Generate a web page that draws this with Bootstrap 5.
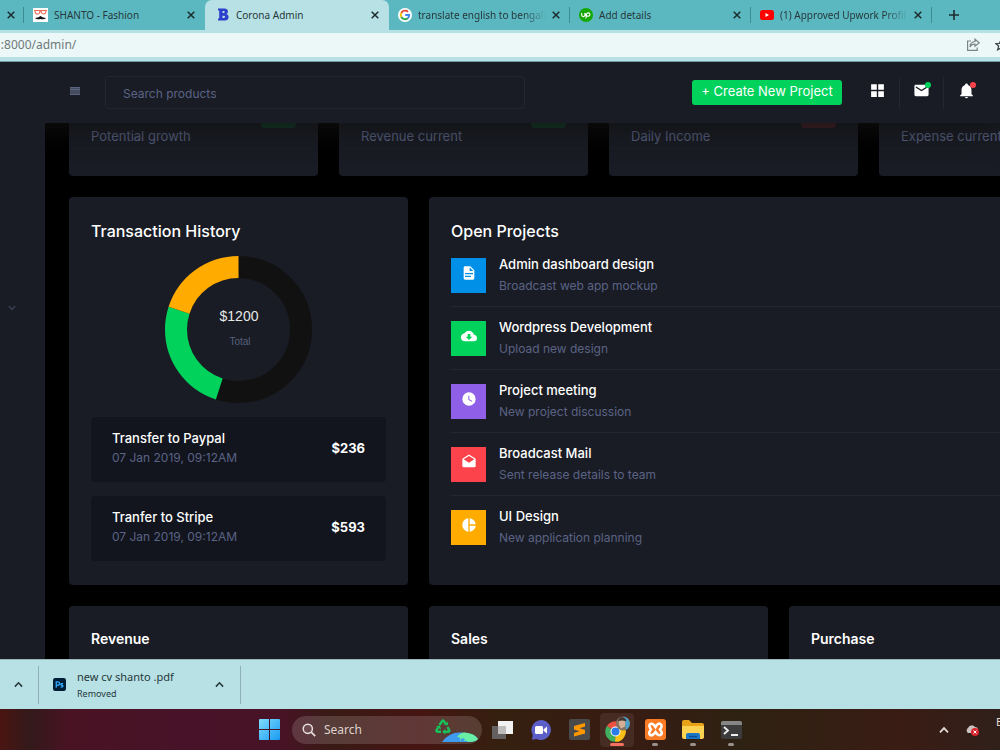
<!DOCTYPE html>
<html lang="en">
<head>
<meta charset="utf-8">
<meta name="viewport" content="width=device-width, initial-scale=1">
<title>Corona Admin</title>
<link href="https://cdn.jsdelivr.net/npm/bootstrap@5.3.0/dist/css/bootstrap.min.css" rel="stylesheet">
<style>
:root{--panel:#191c24;--muted:#5b6385;--teal:#5bb8c1;--aqua:#b7e1e4;--line:#242731}
body{font-family:Inter,"Liberation Sans",sans-serif;font-size:13px;line-height:20px;background:#000;color:#fff}
button{font:inherit}
svg{display:block;flex:none}
.chrome-ui{font-family:"Noto Sans","Open Sans",sans-serif;color:#26383b}
.icon-btn{border:0;background:none;padding:0;color:inherit}
/* browser tabs */
.tab-strip{height:30px;background:var(--teal);font-size:10px}
.tab-item{width:181px;height:30px;padding:0 10px 1px 9px;gap:6px;flex:none;position:relative}
.tab-item a{color:inherit;text-decoration:none;white-space:nowrap;overflow:hidden}
.tab-item.first-tab{width:24px;padding:0 9px 0 0}
.tab-item.split::after{content:"";position:absolute;right:0;top:7px;height:16px;width:1px;background:#3f8b93}
.tab-item.current{width:184px;padding-left:12px;background:var(--aqua);border-radius:7px 7px 0 0}
.fade-end{-webkit-mask-image:linear-gradient(90deg,#000 82%,transparent)}
.address-row{height:32px;background:var(--aqua);padding:3px 0 4px;border-bottom:1px solid #6f9d9f}
.address-field{background:#ecf8f8}
.address-field input{border:0;background:none;color:#71797a;font-size:12px;margin-left:-6px;padding:0;outline:0}
.star-btn{width:5px;margin-left:14px}
/* dashboard */
.top-bar{height:61px;background:var(--panel);padding:0 26px 0 70px;box-shadow:0 4px 30px #111;position:relative;z-index:2}
.menu-btn{padding-bottom:4px;margin-right:25px}
.search-field{max-width:420px;height:33px;background:var(--panel);border:1px solid #242731;border-radius:4px;color:#fff;font-size:12px;padding:1px 17px 0}
.search-field::placeholder{color:var(--muted);opacity:1}
.btn-create{background:#00d25b;color:#fff;font-size:13px;line-height:20px;padding:1px 0 4px;width:150px;border-radius:3px;border:0;white-space:nowrap}
.btn-create:hover{background:#00b84f;color:#fff}
.bar-icons{margin-left:14px;margin-right:-14px}
.bar-icons>*{width:44px;height:31px;border-right:1px solid var(--line);padding-bottom:4px}
.bar-icons>*:last-child{border:0}
.dot{position:absolute;top:0;right:-1px;width:6px;height:6px;border-radius:50%}
.shell{width:calc(100vw + 152px)}
.side-bar{width:45px;background:var(--panel);flex:none;position:relative;z-index:3}
.content-area{padding:0 24px}
.content-area>.row{--bs-gutter-x:21px;margin-bottom:21px}
.panel{background:var(--panel);border-radius:4px;padding:22px 22px 24px;height:100%}
.panel.stat{border-radius:0 0 4px 4px;padding:0 22px;height:53px}
.stat-mark{width:35px;height:5px;border-radius:0 0 4px 4px}
.sub{color:var(--muted);font-size:12px}
.panel h2{font-size:16px;line-height:24px;font-weight:500;margin:0}
.panel.brief h2{font-size:14px;line-height:22px;font-weight:600}
h3{font-size:13px;line-height:21px;font-weight:500;margin:0}
.panel.stat .sub{padding-top:3px;font-size:13px}
.donut{margin:13px auto 14px}
.tx{background:#12151e;border-radius:4px;padding:11px 21px 14px;margin-bottom:14px}
.tx:last-child{margin:0}
.tx h3{line-height:20px}
.projects{padding-top:1px}
.project{height:63px;border-bottom:1px solid var(--line);gap:13px}
.project:last-child{border-color:transparent}
.project .sub{line-height:21px}
.tile{width:35px;height:35px;padding-bottom:4px;flex:none}
/* bottom bars */
.downloads{height:50px;background:var(--aqua);font-size:11px;border-top:1px solid #97b9bc;line-height:17px}
.downloads .rule{width:1px;height:38px;background:#8fb1b4}
.file-name{width:138px;margin-left:11px}
.file-state{font-size:9px}
.taskbar{height:41px;background:linear-gradient(90deg,#4a1512 0,#33191a 3%,#4a1324 7%,#481328 18%,#481326 28%,#391a15 33%,#461513 42%,#35200f 50%,#381b13 62%,#2e2213 74%,#3a1c14 90%,#30201a);color:#e4dcd8}
.task-side{flex:1 1 0;min-width:0}
.task-search{width:190px;height:28px;border-radius:14px;background:#ffffff26;padding-left:10px;overflow:hidden;flex:none}
.task-search input{border:0;background:none;outline:0;color:#e4dcd8;font-size:12px;width:105px;padding:0 0 0 8px}
.task-search input::placeholder{color:#ddd2ce;opacity:1}
.app{width:38px;height:40px;position:relative}
.app::after{content:"";position:absolute;bottom:4px;left:50%;margin-left:-3px;width:6px;height:3px;border-radius:2px;background:transparent}
.app.open::after{background:#9b918c}
.app.active::after{background:#f4705f;width:14px;margin-left:-7px}
.app.active::before{content:"";position:absolute;inset:3px 2px;background:#ffffff12;border-radius:4px}
.lang{width:4px;font-size:11px;height:31px;line-height:16px}
</style>
</head>
<body class="vh-100 d-flex flex-column overflow-hidden">
<svg width="0" height="0" class="position-absolute" aria-hidden="true">
  <symbol id="x" viewBox="0 0 8 8"><path d="M.7.7l6.6 6.6M7.3.7L.7 7.3" stroke="#1c2b2e" stroke-width="1.5"/></symbol>
  <symbol id="up" viewBox="0 0 8 6"><path d="M.8 4.9L4 1.5l3.2 3.4" fill="none" stroke="currentColor" stroke-width="1.4"/></symbol>
</svg>

<nav class="tab-strip chrome-ui d-flex align-items-center flex-shrink-0 overflow-hidden" aria-label="Browser tabs">
  <div class="tab-item first-tab split d-flex align-items-center justify-content-end"><button class="icon-btn" aria-label="Close tab"><svg width="8" height="8"><use href="#x"/></svg></button></div>
  <div class="tab-item d-flex align-items-center">
    <svg width="15" height="14" viewBox="0 0 15 14"><path fill="#fff" d="M0 0h15v14H0z"/><path d="M1 2.500h13M2 2.500q0 4 3 3.500Q7 5.500 7 2.500M8 2.500q0 3 2.500 3.500Q13 6 13 2.500" fill="none" stroke="#ee6c55" stroke-width="1.100"/><path d="M2 10q3 0 5.500-2Q10 10 13 10q-1.500 2-5.500 1Q3.500 12 2 10z" fill="#111"/></svg>
    <a href="#" class="flex-fill">SHANTO - Fashion</a>
    <button class="icon-btn" aria-label="Close tab"><svg width="8" height="8"><use href="#x"/></svg></button>
  </div>
  <div class="tab-item current d-flex align-items-center">
    <svg width="13" height="13" viewBox="0 0 13 13"><path fill="#2b3fcb" fill-rule="evenodd" d="M1 .5h6.500c4 0 4.500 4.500 1.800 5.500 3.500 1.200 3 6.500-1.500 6.500H1v-2h1.200v-8H1zM5.500 3v2h1.300C8 5 8 3 6.800 3zM5.500 7.800V10H7c1.500 0 1.500-2.200 0-2.200z"/></svg>
    <a href="#" class="flex-fill">Corona Admin</a>
    <button class="icon-btn" aria-label="Close tab"><svg width="8" height="8"><use href="#x"/></svg></button>
  </div>
  <div class="tab-item split d-flex align-items-center">
    <svg width="14" height="14" viewBox="0 0 14 14"><circle cx="7" cy="7" r="7" fill="#fff"/><g fill="none" stroke-width="1.900"><path d="M10 3.800A4.200 4.200 0 0 0 3.300 5" stroke="#ea4335"/><path d="M3.300 5a4.200 4.200 0 0 0 0 4" stroke="#fbbc05"/><path d="M3.300 9a4.200 4.200 0 0 0 6.500 1.200" stroke="#34a853"/><path d="M9.800 10.200A4.200 4.200 0 0 0 11.200 7H7.200" stroke="#4285f4"/></g></svg>
    <a href="#" class="flex-fill fade-end">translate english to bengali</a>
    <button class="icon-btn" aria-label="Close tab"><svg width="8" height="8"><use href="#x"/></svg></button>
  </div>
  <div class="tab-item split d-flex align-items-center">
    <svg width="14" height="14" viewBox="0 0 14 14"><circle cx="7" cy="7" r="7" fill="#14a800"/><path d="M2.700 5v2a1.600 1.600 0 0 0 3.200 0V5C6.500 7 7.500 8.300 9.200 8.300a1.700 1.700 0 1 0-1.700-1.700L6.800 10.500" fill="none" stroke="#fff" stroke-width="1.100"/></svg>
    <a href="#" class="flex-fill">Add details</a>
    <button class="icon-btn" aria-label="Close tab"><svg width="8" height="8"><use href="#x"/></svg></button>
  </div>
  <div class="tab-item split d-flex align-items-center">
    <svg width="14" height="10" viewBox="0 0 14 10"><rect width="14" height="10" rx="2.500" fill="#f00"/><path d="M5.500 3v4L9 5z" fill="#fff"/></svg>
    <a href="#" class="flex-fill fade-end">(1) Approved Upwork Profil</a>
    <button class="icon-btn" aria-label="Close tab"><svg width="8" height="8"><use href="#x"/></svg></button>
  </div>
  <button class="icon-btn ms-3" aria-label="New tab"><svg width="12" height="12" viewBox="0 0 12 12"><path d="M6 1v10M1 6h10" stroke="#1c2b2e" stroke-width="1.600"/></svg></button>
</nav>

<div class="address-row chrome-ui flex-shrink-0">
  <div class="address-field h-100 d-flex align-items-center overflow-hidden">
    <input class="flex-fill" type="text" aria-label="Address" value="1:8000/admin/">
    <button class="icon-btn" aria-label="Share"><svg width="15" height="14" viewBox="0 0 15 14" fill="none" stroke="#7b8384" stroke-width="1.200"><path d="M5 3H1.600v9.400h9.600V9.500M9 1.200l4.200 3.600L9 8.300V6.200C6.800 6.200 5 7 3.900 9c.2-3 2-5.200 5.100-5.500z"/></svg></button>
    <button class="icon-btn star-btn" aria-label="Bookmark"><svg width="12" height="12" viewBox="0 0 12 12"><path d="M6 .8l1.500 3.500 3.800.3-2.900 2.500.9 3.700L6 8.900l-3.300 1.900.9-3.700L.7 4.600l3.800-.3z" fill="none" stroke="#40484a" stroke-width="1.300"/></svg></button>
  </div>
</div>

<main class="flex-fill overflow-hidden d-flex flex-column" style="min-height:0">
  <header class="top-bar d-flex align-items-center flex-shrink-0">
    <button class="icon-btn menu-btn" aria-label="Toggle menu"><svg width="10" height="8" viewBox="0 0 10 8"><path d="M0 .8h10M0 2.900h10M0 5h10M0 7.100h10" stroke="#747c9c" stroke-width="1.200"/></svg></button>
    <input class="search-field form-control" type="search" placeholder="Search products" aria-label="Search products">
    <button class="btn btn-create ms-auto flex-shrink-0">+ Create New Project</button>
    <div class="bar-icons d-flex">
      <button class="icon-btn d-flex align-items-center justify-content-center" aria-label="Apps"><svg width="17" height="17" viewBox="0 0 24 24" fill="#fff"><path d="M3 11H11V3H3M3 21H11V13H3M13 21H21V13H13M13 3V11H21V3"/></svg></button>
      <button class="icon-btn d-flex align-items-center justify-content-center" aria-label="Messages"><span class="position-relative"><svg width="17" height="17" viewBox="0 0 24 24" fill="#fff"><path d="M20,8L12,13L4,8V6L12,11L20,6M20,4H4C2.89,4 2,4.89 2,6V18A2,2 0 0,0 4,20H20A2,2 0 0,0 22,18V6C22,4.89 21.1,4 20,4Z"/></svg><span class="dot" style="background:#00d25b"></span></span></button>
      <button class="icon-btn d-flex align-items-center justify-content-center" aria-label="Notifications"><span class="position-relative"><svg width="17" height="17" viewBox="0 0 24 24" fill="#fff"><path d="M21,19V20H3V19L5,17V11C5,7.900 7.030,5.170 10,4.290C10,4.190 10,4.100 10,4A2,2 0 0,1 12,2A2,2 0 0,1 14,4C14,4.100 14,4.190 14,4.290C16.970,5.170 19,7.900 19,11V17L21,19M14,21A2,2 0 0,1 12,23A2,2 0 0,1 10,21"/></svg><span class="dot" style="background:#fc424a"></span></span></button>
    </div>
  </header>

  <div class="shell d-flex flex-fill" style="min-height:0">
    <aside class="side-bar"><button class="icon-btn d-block" style="padding:182px 0 0 8px;color:#3a4056" aria-label="Expand menu"><svg width="8" height="6" style="transform:rotate(180deg)"><use href="#up"/></svg></button></aside>
    <div class="content-area flex-fill">
      <div class="row">
        <div class="col-3"><div class="panel stat d-flex justify-content-between"><span class="sub">Potential growth</span><span class="stat-mark" style="background:#10412d"></span></div></div>
        <div class="col-3"><div class="panel stat d-flex justify-content-between"><span class="sub">Revenue current</span><span class="stat-mark" style="background:#10412d"></span></div></div>
        <div class="col-3"><div class="panel stat d-flex justify-content-between"><span class="sub">Daily Income</span><span class="stat-mark" style="background:#4a202a"></span></div></div>
        <div class="col-3"><div class="panel stat d-flex justify-content-between"><span class="sub">Expense current</span><span class="stat-mark" style="background:#10412d"></span></div></div>
      </div>
      <div class="row">
        <div class="col-4"><section class="panel">
          <h2>Transaction History</h2>
          <svg class="donut" width="147" height="147" viewBox="0 0 147 147" role="img" aria-label="Transactions total">
            <g fill="none" stroke-width="22" transform="rotate(-90 73.500 73.500)">
              <circle cx="73.500" cy="73.500" r="62.500" stroke="#111" pathLength="100" stroke-dasharray="55 45"/>
              <circle cx="73.500" cy="73.500" r="62.500" stroke="#00d25b" pathLength="100" stroke-dasharray="25 75" stroke-dashoffset="-55"/>
              <circle cx="73.500" cy="73.500" r="62.500" stroke="#ffab00" pathLength="100" stroke-dasharray="20 80" stroke-dashoffset="-80"/>
            </g>
            <g text-anchor="middle" font-family="Liberation Sans, Arial, sans-serif"><text x="74" y="65" font-size="14" fill="#e8e8e8">$1200</text><text x="75" y="89" font-size="10" fill="#57607f">Total</text></g>
          </svg>
          <div class="tx d-flex align-items-center justify-content-between"><div><h3>Transfer to Paypal</h3><div class="sub">07 Jan 2019, 09:12AM</div></div><strong>$236</strong></div>
          <div class="tx d-flex align-items-center justify-content-between"><div><h3>Tranfer to Stripe</h3><div class="sub">07 Jan 2019, 09:12AM</div></div><strong>$593</strong></div>
        </section></div>
        <div class="col-8"><section class="panel">
          <h2>Open Projects</h2>
          <div class="projects">
            <div class="project d-flex align-items-center"><span class="tile d-flex align-items-center justify-content-center" style="background:#0090e7"><svg width="16" height="16" viewBox="0 0 24 24" fill="#fff"><path d="M13,9H18.500L13,3.500V9M6,2H14L20,8V20A2,2 0 0,1 18,22H6C4.890,22 4,21.100 4,20V4C4,2.890 4.890,2 6,2M15,18V16H6V18H15M18,14V12H6V14H18Z"/></svg></span><div><h3>Admin dashboard design</h3><div class="sub">Broadcast web app mockup</div></div></div>
            <div class="project d-flex align-items-center"><span class="tile d-flex align-items-center justify-content-center" style="background:#00d25b"><svg width="16" height="16" viewBox="0 0 24 24" fill="#fff"><path d="M17,13L12,18L7,13H10V9H14V13M19.350,10.030C18.670,6.590 15.640,4 12,4C9.110,4 6.600,5.640 5.350,8.030C2.340,8.360 0,10.900 0,14A6,6 0 0,0 6,20H19A5,5 0 0,0 24,15C24,12.360 21.950,10.220 19.350,10.030Z"/></svg></span><div><h3>Wordpress Development</h3><div class="sub">Upload new design</div></div></div>
            <div class="project d-flex align-items-center"><span class="tile d-flex align-items-center justify-content-center" style="background:#8f5fe8"><svg width="16" height="16" viewBox="0 0 24 24" fill="#fff"><path d="M12,2A10,10 0 0,0 2,12A10,10 0 0,0 12,22A10,10 0 0,0 22,12A10,10 0 0,0 12,2M16.200,16.200L11,13V7H12.500V12.200L17,14.900L16.200,16.200Z"/></svg></span><div><h3>Project meeting</h3><div class="sub">New project discussion</div></div></div>
            <div class="project d-flex align-items-center"><span class="tile d-flex align-items-center justify-content-center" style="background:#fc424a"><svg width="16" height="16" viewBox="0 0 24 24" fill="#fff"><path d="M4,8L12,13L20,8V8L12,3L4,8V8M22,8V18A2,2 0 0,1 20,20H4A2,2 0 0,1 2,18V8C2,7.270 2.390,6.640 2.970,6.290L12,0.640L21.030,6.290C21.610,6.640 22,7.270 22,8Z"/></svg></span><div><h3>Broadcast Mail</h3><div class="sub">Sent release details to team</div></div></div>
            <div class="project d-flex align-items-center"><span class="tile d-flex align-items-center justify-content-center" style="background:#ffab00"><svg width="16" height="16" viewBox="0 0 24 24" fill="#fff"><path d="M11,2V22C5.900,21.500 2,17.200 2,12C2,6.800 5.900,2.500 11,2M13,2V11H22C21.500,6.200 17.800,2.500 13,2M13,13V22C17.700,21.500 21.500,17.800 22,13H13Z"/></svg></span><div><h3>UI Design</h3><div class="sub">New application planning</div></div></div>
          </div>
        </section></div>
      </div>
      <div class="row">
        <div class="col-4"><section class="panel brief"><h2>Revenue</h2></section></div>
        <div class="col-4"><section class="panel brief"><h2>Sales</h2></section></div>
        <div class="col-4"><section class="panel brief"><h2>Purchase</h2></section></div>
      </div>
    </div>
  </div>
</main>

<div class="downloads chrome-ui d-flex align-items-center flex-shrink-0">
  <button class="icon-btn" style="padding:0 15px 0 14px" aria-label="Download options"><svg width="9" height="7"><use href="#up"/></svg></button>
  <span class="rule"></span>
  <svg style="margin-left:14px" width="13" height="13" viewBox="0 0 12 12" role="img" aria-label="Photoshop file"><rect width="12" height="12" rx="2" fill="#001e36"/><g fill="none" stroke="#31a8ff" stroke-width="1.200"><path d="M3 9V3.500h1.500a1.500 1.500 0 0 1 0 3.200H3M9.300 5.300c-2.500-.8-2.500 1.200-1 1.400s1.300 2-1.300 1.500"/></g></svg>
  <div class="file-name"><div>new cv shanto .pdf</div><div class="file-state">Removed</div></div>
  <button class="icon-btn" style="padding:0 16px 0 0" aria-label="File options"><svg width="9" height="7"><use href="#up"/></svg></button>
  <span class="rule"></span>
</div>

<footer class="taskbar chrome-ui d-flex align-items-center flex-shrink-0">
  <div class="task-side"></div>
  <button class="icon-btn" style="margin-right:12px" aria-label="Start"><svg width="21" height="21" viewBox="0 0 21 21"><defs><linearGradient id="win" x2="1" y2="1"><stop stop-color="#7fdcff"/><stop offset="1" stop-color="#189af0"/></linearGradient></defs><path fill="url(#win)" d="M0 1q0-1 1-1h9v10H0zM11 0h9q1 0 1 1v9H11zM0 11h10v10H1q-1 0-1-1zM11 11h10v9q0 1-1 1h-9z"/></svg></button>
  <div class="task-search d-flex align-items-center">
    <svg width="14" height="14" viewBox="0 0 14 14"><circle cx="5.800" cy="5.800" r="4.600" fill="#ffffff18" stroke="#e8dedb" stroke-width="1.500"/><path d="M9.200 9.200l4 4" stroke="#e8dedb" stroke-width="1.700"/></svg>
    <input type="text" placeholder="Search" aria-label="Search">
    <svg class="ms-auto" width="50" height="28" viewBox="0 0 50 28"><path d="M10 26Q17 15.500 30 16.500 42 17 46 23 44 26 36 26z" fill="#3f9bf0"/><path d="M25 21q4-5 9-4.300 9 1 12 6.300-2 3-10 3-1-2-4-1-5 1-4-2 1-2-3-2z" fill="#67f0a6"/><path d="M28 24q2-3 5-1l-2 3z" fill="#3f9bf0"/><g fill="none" stroke="#16c35a" stroke-width="2.400" stroke-linejoin="round"><path d="M7.500 9l2.700-4q.8-1 1.600 0l1.600 2.700M15.500 11l1.700 3q.6 1.600-1 1.800h-3.400M9 15.800H5.600q-1.700-.2-1-1.800l1.500-2.500"/></g><path d="M11.800 8.700l4 .7.300-4zM13.200 13v5.400L10.200 15.800zM4 10.300l4-.8 1 4z" fill="#16c35a"/></svg>
  </div>
  <div class="d-flex" style="margin-left:2px;margin-right:-9px">
    <button class="app icon-btn d-flex align-items-center justify-content-center" aria-label="Task view"><svg width="22" height="20" viewBox="0 0 22 20"><path fill="#65605f" d="M0 6h14v13H0z"/><path fill="#f2f2f2" d="M6 1h15v13H6z"/><path fill="#bfbdbc" d="M6 6h8v8H6z"/></svg></button>
    <button class="app icon-btn d-flex align-items-center justify-content-center" aria-label="Chat"><svg width="20" height="20" viewBox="0 0 20 20"><path fill="#5b5fc7" d="M10 0a10 10 0 1 1-4.500 19L1 19.800 1.800 15A10 10 0 0 1 10 0z"/><rect x="4" y="6" width="8" height="8" rx="1.500" fill="#fff"/><path d="M12.500 9.500L16 6.500v7l-3.500-2.800z" fill="#fff"/></svg></button>
    <button class="app icon-btn d-flex align-items-center justify-content-center" aria-label="Sublime Text"><svg width="21" height="21" viewBox="0 0 21 21"><rect width="21" height="21" rx="2" fill="#4a4a4a"/><path fill="#ff9800" d="M16 4v3.600l-5.500 1.700 5.500 1.700v3.500L5 17.500v-3.600l5.500-1.700L5 10.500V7z"/></svg></button>
    <button class="app active icon-btn d-flex align-items-center justify-content-center" aria-label="Chrome"><svg width="26" height="28" viewBox="0 0 26 28"><path d="M11.500 15.500L2.800 10A10.300 10.300 0 0 1 20.500 10.500z" fill="#ea4335"/><path d="M11.500 15.500L20.400 10.400A10.300 10.300 0 0 1 11 25.800z" fill="#fbbc05"/><path d="M11.500 15.500L11 25.800A10.300 10.300 0 0 1 2.800 10z" fill="#34a853"/><circle cx="11.500" cy="15.500" r="5" fill="#fff"/><circle cx="11.500" cy="15.500" r="4" fill="#1a73e8"/><circle cx="19" cy="7.500" r="7" fill="#7c6755"/><path d="M20 .7a7 7 0 0 1 2 13z" fill="#3a9cc8"/><path d="M14.500 5.500q4-5 7 0l-.5 5-4 2q-2-2-2.500-7z" fill="#d0a98b"/><path d="M14 5.500q1-5 5-4 4 1 3 4-4-2-8 0z" fill="#332824"/></svg></button>
    <button class="app open icon-btn d-flex align-items-center justify-content-center" aria-label="XAMPP"><svg width="21" height="21" viewBox="0 0 21 21"><rect width="21" height="21" rx="3" fill="#fb7a24"/><path d="M10.500 8Q8 4 5.500 5T6 10.500Q3 14 5 15.800T10.500 13Q13.500 17.500 15.800 15.800T15 10.500Q18 6.500 15.500 5T10.500 8z" fill="none" stroke="#fff" stroke-width="2.600"/></svg></button>
    <button class="app open icon-btn d-flex align-items-center justify-content-center" aria-label="File Explorer"><svg width="22" height="20" viewBox="0 0 22 20"><path d="M0 2q0-2 2-2h5l3 3h10q2 0 2 2v4H0z" fill="#e8a317"/><path d="M0 6h22v11q0 2-2 2H2q-2 0-2-2z" fill="#ffd352"/><path d="M4 19v-4q0-2 2-2h10q2 0 2 2v4z" fill="#1b78c8"/><path d="M7 16.500h8" stroke="#0d4f91" stroke-width="1.500"/></svg></button>
    <button class="app open icon-btn d-flex align-items-center justify-content-center" aria-label="Terminal"><svg width="21" height="18" viewBox="0 0 21 18"><rect width="21" height="18" rx="2" fill="#3c3c3c"/><path d="M0 2q0-2 2-2h17q2 0 2 2v2H0z" fill="#858585"/><path d="M3 6l4 3.500L3 13M10 14h7" fill="none" stroke="#eee" stroke-width="1.800"/></svg></button>
  </div>
  <div class="task-side d-flex align-items-center justify-content-end overflow-hidden">
    <button class="icon-btn" style="margin-right:16px" aria-label="Show hidden icons"><svg width="10" height="8"><use href="#up"/></svg></button>
    <button class="icon-btn" style="margin-right:17px" aria-label="Cloud sync"><svg width="14" height="12" viewBox="0 0 14 12"><path d="M3 9a3 3 0 0 1 0-5 4 4 0 0 1 7-1 3 3 0 0 1 3 3L9 9z" fill="#c9c2c0"/><circle cx="10" cy="8" r="4" fill="#d8252c"/><path d="M8.500 6.500l3 3M11.500 6.500l-3 3" stroke="#fff"/></svg></button>
    <span class="lang">E</span>
  </div>
</footer>
<script src="https://cdn.jsdelivr.net/npm/bootstrap@5.3.0/dist/js/bootstrap.bundle.min.js"></script>
</body>
</html>
